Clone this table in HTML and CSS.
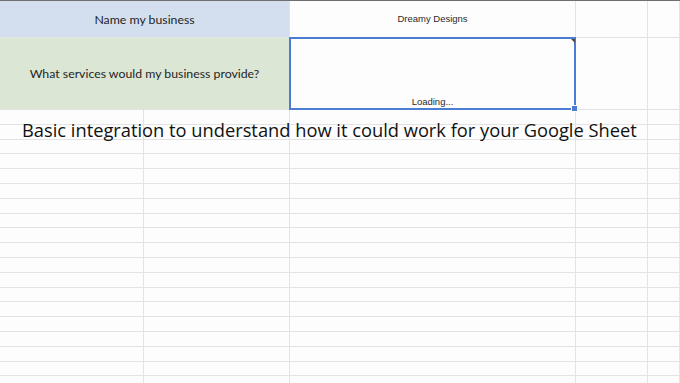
FILE: index.html
```html
<!DOCTYPE html>
<html>
<head>
<meta charset="utf-8">
<link rel="stylesheet" href="styles.css">
</head>
<body>
<div class="page">
  <div class="sheet">
    <div class="cell span2 blue"><span class="label">Name my business</span></div>
    <div class="cell value top">Dreamy Designs</div>
    <div class="cell"></div>
    <div class="cell"></div>

    <div class="cell span2 green"><span class="label">What services would my business provide?</span></div>
    <div class="cell value bottom selected">Loading...<span class="note"></span><span class="handle"></span></div>
    <div class="cell"></div>
    <div class="cell"></div>

    <div class="cell"></div><div class="cell"></div><div class="cell"></div><div class="cell"></div><div class="cell"></div>
    <div class="cell"></div><div class="cell"></div><div class="cell"></div><div class="cell"></div><div class="cell"></div>
    <div class="cell"></div><div class="cell"></div><div class="cell"></div><div class="cell"></div><div class="cell"></div>
    <div class="cell"></div><div class="cell"></div><div class="cell"></div><div class="cell"></div><div class="cell"></div>
    <div class="cell"></div><div class="cell"></div><div class="cell"></div><div class="cell"></div><div class="cell"></div>
    <div class="cell"></div><div class="cell"></div><div class="cell"></div><div class="cell"></div><div class="cell"></div>
    <div class="cell"></div><div class="cell"></div><div class="cell"></div><div class="cell"></div><div class="cell"></div>
    <div class="cell"></div><div class="cell"></div><div class="cell"></div><div class="cell"></div><div class="cell"></div>
    <div class="cell"></div><div class="cell"></div><div class="cell"></div><div class="cell"></div><div class="cell"></div>
    <div class="cell"></div><div class="cell"></div><div class="cell"></div><div class="cell"></div><div class="cell"></div>
    <div class="cell"></div><div class="cell"></div><div class="cell"></div><div class="cell"></div><div class="cell"></div>
    <div class="cell"></div><div class="cell"></div><div class="cell"></div><div class="cell"></div><div class="cell"></div>
    <div class="cell"></div><div class="cell"></div><div class="cell"></div><div class="cell"></div><div class="cell"></div>
    <div class="cell"></div><div class="cell"></div><div class="cell"></div><div class="cell"></div><div class="cell"></div>
    <div class="cell"></div><div class="cell"></div><div class="cell"></div><div class="cell"></div><div class="cell"></div>
    <div class="cell"></div><div class="cell"></div><div class="cell"></div><div class="cell"></div><div class="cell"></div>
    <div class="cell"></div><div class="cell"></div><div class="cell"></div><div class="cell"></div><div class="cell"></div>
    <div class="cell"></div><div class="cell"></div><div class="cell"></div><div class="cell"></div><div class="cell"></div>
    <div class="cell"></div><div class="cell"></div><div class="cell"></div><div class="cell"></div><div class="cell"></div>
  </div>
  <div class="caption">Basic integration to understand how it could work for your Google Sheet</div>
</div>
</body>
</html>
```
FILE: styles.css
```css
html, body {
  margin: 0;
  padding: 0;
  background: #fdfdfd;
  overflow: hidden;
}

.page {
  position: relative;
  width: 680px;
  height: 383px;
  overflow: hidden;
}

.sheet {
  display: grid;
  grid-template-columns: 144px 146px 286px 72px 1fr;
  grid-template-rows: 37px 72px;
  grid-auto-rows: 14.8px;
  border-top: 1px solid #6f6f6f;
  background: #fdfdfd;
}

.cell {
  box-sizing: border-box;
  border-right: 1px solid #e3e3e3;
  border-bottom: 1px solid #e3e3e3;
  min-width: 0;
}

.span2 {
  grid-column: span 2;
  display: flex;
  align-items: center;
  justify-content: center;
}

.blue {
  background: #d3dfee;
}

.green {
  background: #dbe6d5;
}

.label {
  font-family: Lato, "Open Sans", sans-serif;
  font-size: 12.3px;
  color: #1f1f1f;
}

.value {
  display: flex;
  justify-content: center;
  font-family: "Liberation Sans", Arial, sans-serif;
  font-size: 9.5px;
  color: #2a2a2a;
}

.top {
  align-items: center;
  padding-bottom: 1px;
}

.bottom {
  align-items: flex-end;
  padding-bottom: 2px;
}

.selected {
  position: relative;
}

.selected::before {
  content: "";
  position: absolute;
  left: -1px;
  top: -1px;
  right: -1px;
  bottom: -1px;
  border: 2px solid #4b7dd2;
  pointer-events: none;
}

.note {
  position: absolute;
  top: 1px;
  right: 0;
  width: 0;
  height: 0;
  border-top: 4px solid #4a4a4a;
  border-left: 4px solid transparent;
}

.handle {
  position: absolute;
  right: -3px;
  bottom: -3px;
  width: 5px;
  height: 5px;
  background: #4b7dd2;
  border: 1px solid #fdfdfd;
}

.caption {
  position: absolute;
  left: 22px;
  top: 118px;
  font-family: "Open Sans", "Noto Sans", sans-serif;
  font-size: 18.3px;
  line-height: 24px;
  color: #111;
  white-space: nowrap;
}
```
